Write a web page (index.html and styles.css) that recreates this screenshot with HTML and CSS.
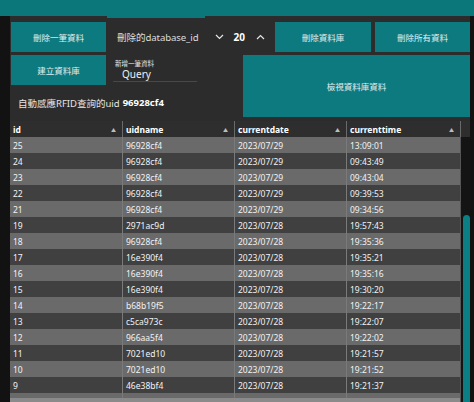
FILE: index.html
```html
<!DOCTYPE html>
<html lang="zh-Hant">
<head>
<meta charset="utf-8">
<title>RFID 資料庫</title>
<link rel="stylesheet" href="styles.css">
</head>
<body>
<div class="band"></div>
<div class="frame">
  <div class="edge-l"></div>
  <main class="main">
    <div class="tabline"><div class="tab"></div></div>
    <div class="controls">
      <button class="btn c-a r-1">刪除一筆資料</button>
      <div class="spin r-1">
        <span class="spin-label">刪除的database_id</span>
        <svg class="chev chev-down" width="9" height="6" viewBox="0 0 9 6"><path d="M1 1 L4.5 4.5 L8 1" fill="none" stroke="#e6e6e6" stroke-width="1.2"/></svg>
        <span class="spin-val">20</span>
        <svg class="chev chev-up" width="9" height="6" viewBox="0 0 9 6"><path d="M1 5 L4.5 1.5 L8 5" fill="none" stroke="#e6e6e6" stroke-width="1.2"/></svg>
      </div>
      <button class="btn c-d r-1">刪除資料庫</button>
      <button class="btn c-e r-1">刪除所有資料</button>
      <button class="btn c-a r-2">建立資料庫</button>
      <div class="query r-2">
        <span class="query-label">新增一筆資料</span>
        <span class="query-input">Query</span>
      </div>
      <button class="btn big">檢視資料庫資料</button>
      <div class="rfid">自動感應RFID查詢的uid <b>96928cf4</b></div>
    </div>
    <div class="table">
      <div class="thead">
        <div class="th">id<span class="sort">▲</span></div>
        <div class="th">uidname<span class="sort">▲</span></div>
        <div class="th">currentdate<span class="sort">▲</span></div>
        <div class="th">currenttime<span class="sort">▲</span></div>
        <div class="th th-pad"></div>
      </div>
      <div class="tbody">
        <div class="tleft">
          <div class="rows">
            <div class="tr"><div class="td">25</div><div class="td">96928cf4</div><div class="td">2023/07/29</div><div class="td">13:09:01</div></div>
            <div class="tr"><div class="td">24</div><div class="td">96928cf4</div><div class="td">2023/07/29</div><div class="td">09:43:49</div></div>
            <div class="tr"><div class="td">23</div><div class="td">96928cf4</div><div class="td">2023/07/29</div><div class="td">09:43:04</div></div>
            <div class="tr"><div class="td">22</div><div class="td">96928cf4</div><div class="td">2023/07/29</div><div class="td">09:39:53</div></div>
            <div class="tr"><div class="td">21</div><div class="td">96928cf4</div><div class="td">2023/07/29</div><div class="td">09:34:56</div></div>
            <div class="tr"><div class="td">19</div><div class="td">2971ac9d</div><div class="td">2023/07/28</div><div class="td">19:57:43</div></div>
            <div class="tr"><div class="td">18</div><div class="td">96928cf4</div><div class="td">2023/07/28</div><div class="td">19:35:36</div></div>
            <div class="tr"><div class="td">17</div><div class="td">16e390f4</div><div class="td">2023/07/28</div><div class="td">19:35:21</div></div>
            <div class="tr"><div class="td">16</div><div class="td">16e390f4</div><div class="td">2023/07/28</div><div class="td">19:35:16</div></div>
            <div class="tr"><div class="td">15</div><div class="td">16e390f4</div><div class="td">2023/07/28</div><div class="td">19:30:20</div></div>
            <div class="tr"><div class="td">14</div><div class="td">b68b19f5</div><div class="td">2023/07/28</div><div class="td">19:22:17</div></div>
            <div class="tr"><div class="td">13</div><div class="td">c5ca973c</div><div class="td">2023/07/28</div><div class="td">19:22:07</div></div>
            <div class="tr"><div class="td">12</div><div class="td">966aa5f4</div><div class="td">2023/07/28</div><div class="td">19:22:02</div></div>
            <div class="tr"><div class="td">11</div><div class="td">7021ed10</div><div class="td">2023/07/28</div><div class="td">19:21:57</div></div>
            <div class="tr"><div class="td">10</div><div class="td">7021ed10</div><div class="td">2023/07/28</div><div class="td">19:21:52</div></div>
            <div class="tr"><div class="td">9</div><div class="td">46e38bf4</div><div class="td">2023/07/28</div><div class="td">19:21:37</div></div>
            <div class="tr"><div class="td">8</div><div class="td">b68b19f5</div><div class="td">2023/07/28</div><div class="td">19:21:32</div></div>
          </div>
          <div class="hbar"></div>
        </div>
        <div class="vscroll"><div class="vthumb"></div></div>
      </div>
    </div>
  </main>
  <div class="edge-r"></div>
</div>
</body>
</html>
```
FILE: styles.css
```css
* { box-sizing: border-box; }
html, body { margin: 0; padding: 0; }
body {
  width: 474px;
  height: 402px;
  overflow: hidden;
  background: #2b2b2b;
  font-family: "Noto Sans", "Noto Sans CJK TC", sans-serif;
  color: #f0f0f0;
}
.band { height: 16px; background: #0b777b; }
.frame { display: flex; height: 386px; }
.edge-l { width: 10px; background: #121212; }
.edge-r { width: 4px; background: #121212; }
.main { width: 460px; display: flex; flex-direction: column; background: #2c2c2c; }
.tabline { height: 6px; }
.tab { width: 98px; height: 2px; margin-left: 97px; background: #0b777b; }

.controls {
  display: grid;
  grid-template-columns: 95px 129px 28px 96px 95px;
  grid-template-rows: 30px 30px 29px;
  column-gap: 4px;
  row-gap: 3px;
  padding-left: 1px;
}
.btn {
  border: 0;
  margin: 0;
  padding: 0;
  background: #0c7a7f;
  color: #e4eeee;
  font-family: "Noto Sans CJK TC", sans-serif;
  font-size: 8.5px;
  display: flex;
  align-items: center;
  justify-content: center;
}
.c-a { grid-column: 1; }
.c-d { grid-column: 4; }
.c-e { grid-column: 5; }
.r-1 { grid-row: 1; }
.r-2 { grid-row: 2; }
.big { grid-column: 3 / 6; grid-row: 2 / 4; }

.spin {
  grid-column: 2 / 4;
  display: flex;
  align-items: center;
  padding-left: 7px;
  font-size: 10px;
  color: #dcdcdc;
}
.spin-label { font-family: "Noto Sans", "Noto Sans CJK TC", sans-serif; font-size: 9.6px; letter-spacing: -0.1px; }
.chev-down { margin-left: 17px; }
.spin-val { margin-left: 9px; font-weight: 700; color: #fff; font-size: 10px; }
.chev-up { margin-left: 11px; }

.query {
  grid-column: 2;
  display: flex;
  flex-direction: column;
  margin-left: 3px;
  width: 84px;
  padding-top: 4px;
  border-bottom: 1px solid #3d4c4d;
  margin-bottom: 3px;
}
.query-label { font-family: "Noto Sans CJK TC", sans-serif; font-size: 6.5px; line-height: 9px; color: #e8e8e8; padding-left: 2px; }
.query-input { font-size: 10px; line-height: 12px; padding-left: 9px; color: #f0f0f0; }

.rfid {
  grid-column: 1 / 3;
  grid-row: 3;
  display: flex;
  align-items: center;
  gap: 3px;
  padding-left: 7px;
  font-size: 9.5px;
  color: #e6e6e6;
}
.rfid b { color: #fff; }

.table { margin-top: 4px; display: flex; flex-direction: column; flex: 1; min-height: 0; }
.thead {
  display: grid;
  grid-template-columns: 112px 112px 112px 114px 10px;
  height: 16px;
  background: #2e2e2e;
}
.th {
  display: flex;
  align-items: center;
  justify-content: space-between;
  padding: 0 6px 0 3px;
  font-size: 8.5px;
  font-weight: 700;
  color: #fff;
  border-left: 1px solid #6a6a6a;
}
.th:first-child { border-left: 0; }
.sort { font-size: 5px; color: #bdbdbd; }
.th-pad { padding: 0; }

.tbody { display: flex; flex: 1; min-height: 0; }
.tleft { width: 450px; display: flex; flex-direction: column; }
.rows { height: 261px; overflow: hidden; flex: none; }
.tr {
  display: grid;
  grid-template-columns: 112px 112px 112px 114px;
  height: 16px;
  background: #6a6a6a;
}
.tr:nth-child(even) { background: #404040; }
.td {
  display: flex;
  align-items: center;
  padding-left: 3px;
  font-size: 8.5px;
  color: #f2f2f2;
  border-left: 1px solid #7a7a7a;
}
.td:first-child { border-left: 0; }
.hbar { height: 4px; flex: none; background: #8a8a8a; }
.vscroll {
  width: 10px;
  background: #141414;
  border-left: 1px solid #555;
  padding-top: 78px;
  display: flex;
  justify-content: flex-end;
}
.vthumb { width: 7px; height: 100%; background: #0c7f84; border-radius: 4px 4px 0 0; }
```
